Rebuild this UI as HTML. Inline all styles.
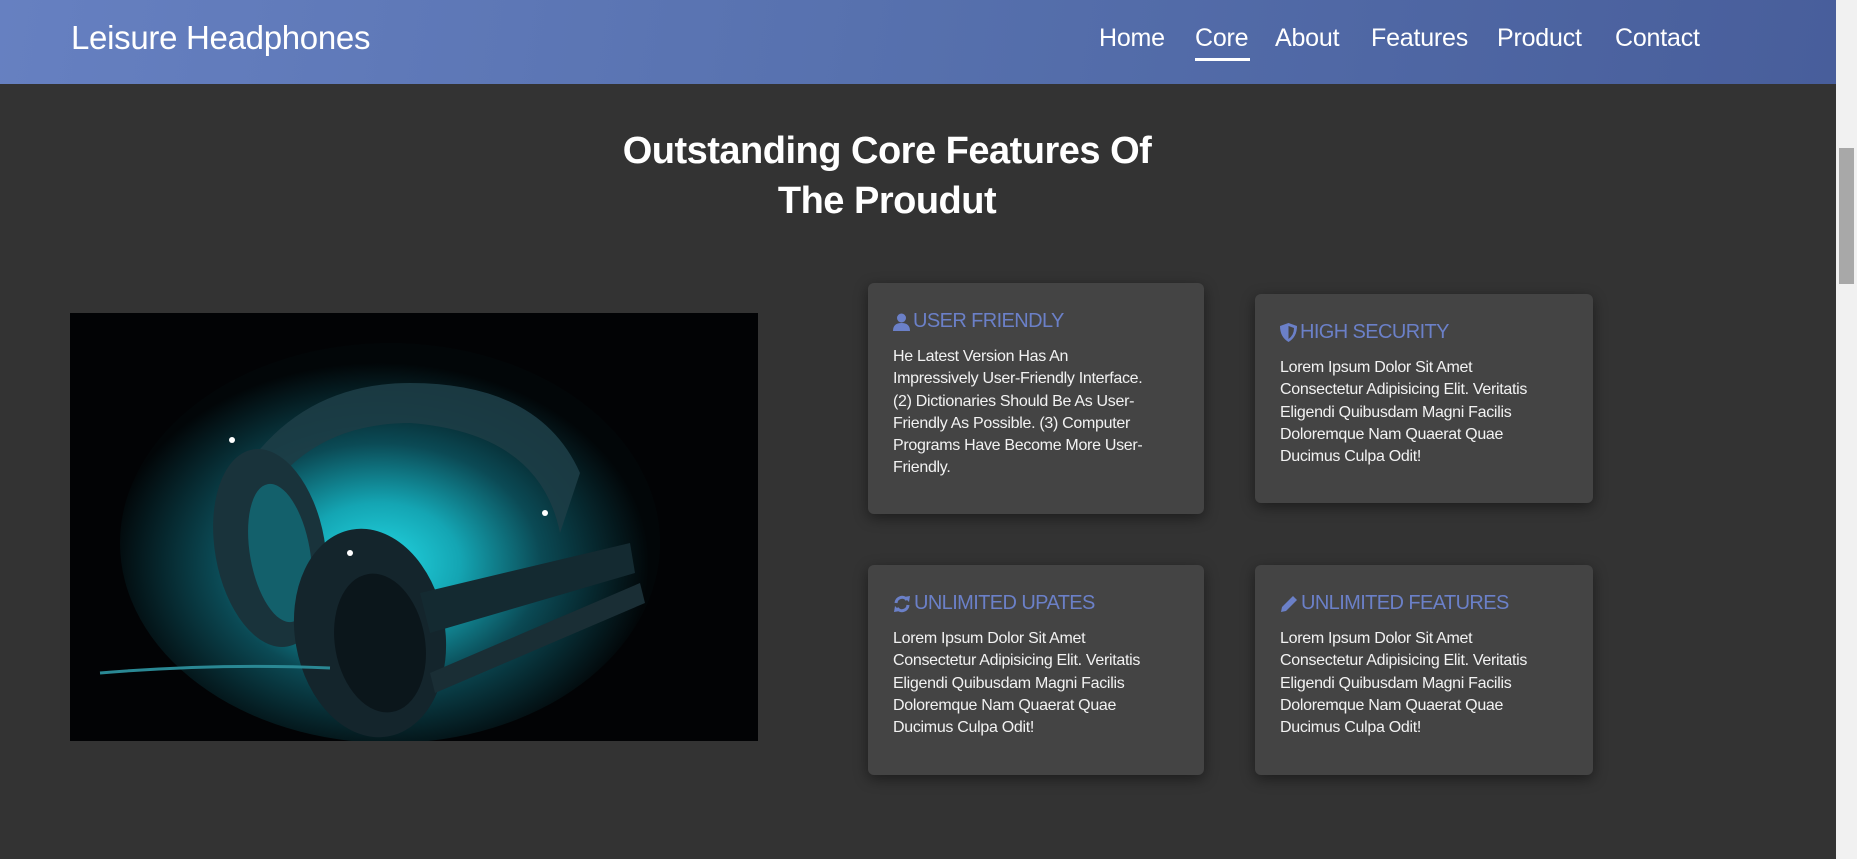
<!DOCTYPE html>
<html><head><meta charset="utf-8">
<style>
*{margin:0;padding:0;box-sizing:border-box}
html,body{width:1857px;height:859px;overflow:hidden;background:#333;font-family:"Liberation Sans",sans-serif}
.hdr{position:absolute;left:0;top:0;width:1836px;height:84px;background:linear-gradient(100deg,#6680c1,#5670ad 50%,#485e9b)}
.logo{position:absolute;left:71px;top:19px;color:#fff;font-size:33px;letter-spacing:-0.3px}
.nav a{position:absolute;top:24px;color:#fff;font-size:25px;text-decoration:none;letter-spacing:-0.2px}
.ul{position:absolute;left:1195px;top:58px;width:55px;height:3px;background:#fff}
h1{position:absolute;left:587px;width:600px;top:126px;text-align:center;color:#fff;font-size:38px;line-height:50px;font-weight:bold;letter-spacing:-0.5px}
.img{position:absolute;left:70px;top:313px;width:688px;height:428px;background:#000}
.card{position:absolute;background:#444;border-radius:6px;box-shadow:0 4px 14px rgba(0,0,0,.45);padding:0 25px;color:#f2f2f2}
.card h3{color:#6b80c8;font-weight:normal;font-size:20px;letter-spacing:-0.6px;margin-top:27px;display:flex;align-items:center;gap:3px}
.card p{font-size:16px;line-height:22.3px;margin-top:13px;letter-spacing:-0.3px;white-space:nowrap}
.sb{position:absolute;left:1836px;top:0;width:21px;height:859px;background:#f1f1f1}
.th{position:absolute;left:1839px;top:148px;width:15px;height:136px;background:#a8a8a8}
</style></head><body>
<div class="hdr">
<div class="logo">Leisure Headphones</div>
<div class="nav">
<a style="left:1099px">Home</a><a style="left:1195px">Core</a><a style="left:1275px">About</a><a style="left:1371px">Features</a><a style="left:1497px">Product</a><a style="left:1615px">Contact</a>
</div>
<div class="ul"></div>
</div>
<h1>Outstanding Core Features Of<br>The Proudut</h1>
<div class="img">
<svg width="688" height="428" viewBox="0 0 688 428">
<defs>
<radialGradient id="g" cx="0.48" cy="0.55" r="0.5">
<stop offset="0" stop-color="#23d8e4"/><stop offset="0.3" stop-color="#14a5b3"/><stop offset="0.6" stop-color="#0b4a55"/><stop offset="1" stop-color="#020608"/>
</radialGradient>
</defs>
<rect width="688" height="428" fill="#020305"/>
<ellipse cx="320" cy="230" rx="270" ry="200" fill="url(#g)"/>
<path d="M160 180 Q220 70 340 70 Q470 70 510 160 L490 220 Q470 120 340 110 Q240 110 190 190Z" fill="#1d3d46" opacity=".9"/>
<ellipse cx="200" cy="235" rx="55" ry="100" fill="#19333b" transform="rotate(-10 200 235)"/>
<ellipse cx="210" cy="240" rx="30" ry="70" fill="#0f7f8c" opacity=".6" transform="rotate(-10 210 240)"/>
<ellipse cx="300" cy="320" rx="75" ry="105" fill="#14252c" transform="rotate(-10 300 320)"/>
<ellipse cx="310" cy="330" rx="45" ry="70" fill="#0b161b" transform="rotate(-10 310 330)"/>
<path d="M350 280 L560 230 L565 260 L360 320Z" fill="#142a31"/>
<path d="M360 360 L570 270 L575 290 L365 380Z" fill="#1a2e35"/>
<path d="M30 360 Q150 350 260 355" stroke="#2a8894" stroke-width="3" fill="none"/>
<circle cx="162" cy="127" r="3" fill="#fff"/><circle cx="280" cy="240" r="3" fill="#fff"/><circle cx="475" cy="200" r="3" fill="#fff"/>
</svg>
</div>
<div class="card" style="left:868px;top:283px;width:336px;height:231px">
<h3><svg width="17" height="18" viewBox="0 0 17 18"><circle cx="8.5" cy="5" r="4.5" fill="#6b80c8"/><path d="M0 18 Q0 10 8.5 10 Q17 10 17 18Z" fill="#6b80c8"/></svg>USER FRIENDLY</h3>
<p>He Latest Version Has An<br>Impressively User-Friendly Interface.<br>(2) Dictionaries Should Be As User-<br>Friendly As Possible. (3) Computer<br>Programs Have Become More User-<br>Friendly.</p>
</div>
<div class="card" style="left:1255px;top:294px;width:338px;height:209px">
<h3><svg width="17" height="19" viewBox="0 0 17 19"><path d="M8.5 0 L17 3 Q17 14 8.5 19 Q0 14 0 3Z" fill="#6b80c8"/><path d="M8.5 3 L14 5 Q14 12 8.5 16Z" fill="#444"/></svg>HIGH SECURITY</h3>
<p>Lorem Ipsum Dolor Sit Amet<br>Consectetur Adipisicing Elit. Veritatis<br>Eligendi Quibusdam Magni Facilis<br>Doloremque Nam Quaerat Quae<br>Ducimus Culpa Odit!</p>
</div>
<div class="card" style="left:868px;top:565px;width:336px;height:210px">
<h3><svg width="18" height="18" viewBox="0 0 18 18"><path d="M3 8 A6 6 0 0 1 14 5" stroke="#6b80c8" stroke-width="3" fill="none"/><path d="M15 10 A6 6 0 0 1 4 13" stroke="#6b80c8" stroke-width="3" fill="none"/><path d="M11 2 L17 1 L16 7Z M7 16 L1 17 L2 11Z" fill="#6b80c8"/></svg>UNLIMITED UPATES</h3>
<p>Lorem Ipsum Dolor Sit Amet<br>Consectetur Adipisicing Elit. Veritatis<br>Eligendi Quibusdam Magni Facilis<br>Doloremque Nam Quaerat Quae<br>Ducimus Culpa Odit!</p>
</div>
<div class="card" style="left:1255px;top:565px;width:338px;height:210px">
<h3><svg width="18" height="18" viewBox="0 0 18 18"><path d="M13 1 L17 5 L6 16 L1 17 L2 12Z" fill="#6b80c8"/></svg>UNLIMITED FEATURES</h3>
<p>Lorem Ipsum Dolor Sit Amet<br>Consectetur Adipisicing Elit. Veritatis<br>Eligendi Quibusdam Magni Facilis<br>Doloremque Nam Quaerat Quae<br>Ducimus Culpa Odit!</p>
</div>
<div class="sb"></div><div class="th"></div>
</body></html>
